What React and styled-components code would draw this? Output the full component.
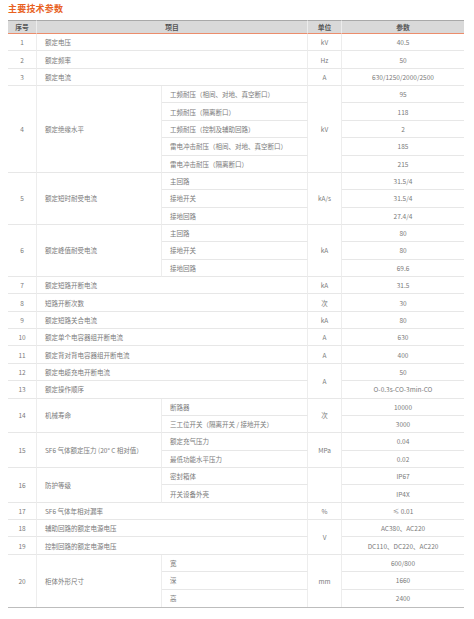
import React from "react";
import styled, { createGlobalStyle } from "styled-components";

const Global = createGlobalStyle`
  html, body { margin: 0; padding: 0; background: #fff; }
  body { font-family: "Noto Sans CJK SC", "Noto Sans", sans-serif; }
`;

const Page = styled.div`
  width: 474px;
  padding: 3px 10px 0 8px;
  box-sizing: border-box;
`;

const Title = styled.h2`
  margin: 0 0 5px 0;
  font-size: 9px;
  line-height: 12px;
  font-weight: 700;
  color: #e8621f;
  letter-spacing: 0.2px;
`;

const Table = styled.div`
  display: grid;
  width: 456px;
  grid-template-columns: 29px 125px 146px 34px 122px;
  grid-template-rows: 14px repeat(33, 17.36px);
  border-bottom: 1px solid #bdbdbd;
`;

const HeadCell = styled.div`
  grid-column: ${(p) => p.$col};
  grid-row: 1;
  background: #d9d9d9;
  border-top: 1.5px solid #a9a9a9;
  border-bottom: 1.5px solid #ec8d6c;
  border-right: ${(p) => (p.$last ? "none" : "1px solid #ececec")};
  display: flex;
  align-items: center;
  justify-content: center;
  font-size: 6.8px;
  font-weight: 700;
  color: #555;
  box-sizing: border-box;
`;

const Cell = styled.div`
  grid-column: ${(p) => p.$col};
  grid-row: ${(p) => p.$row};
  border-bottom: ${(p) => (p.$noBottom ? "none" : "1px solid #e7e7e7")};
  border-right: ${(p) => (p.$last ? "none" : "1px solid #ededed")};
  display: flex;
  align-items: center;
  justify-content: ${(p) => (p.$left ? "flex-start" : "center")};
  padding-left: ${(p) => (p.$left ? "8px" : "0")};
  font-size: 6.5px;
  color: #7a7a7a;
  white-space: nowrap;
  box-sizing: border-box;
`;

const groups = [
  { n: "1", item: "额定电压", unit: "kV", vals: ["40.5"] },
  { n: "2", item: "额定频率", unit: "Hz", vals: ["50"] },
  { n: "3", item: "额定电流", unit: "A", vals: ["630/1250/2000/2500"] },
  {
    n: "4",
    item: "额定绝缘水平",
    unit: "kV",
    subs: [
      "工频耐压（相间、对地、真空断口）",
      "工频耐压（隔离断口）",
      "工频耐压（控制及辅助回路）",
      "雷电冲击耐压（相间、对地、真空断口）",
      "雷电冲击耐压（隔离断口）",
    ],
    vals: ["95", "118", "2", "185", "215"],
  },
  {
    n: "5",
    item: "额定短时耐受电流",
    unit: "kA/s",
    subs: ["主回路", "接地开关", "接地回路"],
    vals: ["31.5/4", "31.5/4", "27.4/4"],
  },
  {
    n: "6",
    item: "额定峰值耐受电流",
    unit: "kA",
    subs: ["主回路", "接地开关", "接地回路"],
    vals: ["80", "80", "69.6"],
  },
  { n: "7", item: "额定短路开断电流", unit: "kA", vals: ["31.5"] },
  { n: "8", item: "短路开断次数", unit: "次", vals: ["30"] },
  { n: "9", item: "额定短路关合电流", unit: "kA", vals: ["80"] },
  { n: "10", item: "额定单个电容器组开断电流", unit: "A", vals: ["630"] },
  { n: "11", item: "额定背对背电容器组开断电流", unit: "A", vals: ["400"] },
  { n: "12", item: "额定电缆充电开断电流", unit: "A", unitSpan: 2, vals: ["50"] },
  { n: "13", item: "额定操作顺序", unit: null, vals: ["O-0.3s-CO-3min-CO"] },
  {
    n: "14",
    item: "机械寿命",
    unit: "次",
    subs: ["断路器", "三工位开关（隔离开关 / 接地开关）"],
    vals: ["10000", "3000"],
  },
  {
    n: "15",
    item: "SF6 气体额定压力 (20° C 相对值）",
    unit: "MPa",
    subs: ["额定充气压力", "最低功能水平压力"],
    vals: ["0.04", "0.02"],
  },
  {
    n: "16",
    item: "防护等级",
    unit: "",
    subs: ["密封箱体", "开关设备外壳"],
    vals: ["IP67", "IP4X"],
  },
  { n: "17", item: "SF6 气体年相对漏率", unit: "%", vals: ["≤ 0.01"] },
  { n: "18", item: "辅助回路的额定电源电压", unit: "V", unitSpan: 2, vals: ["AC380、AC220"] },
  { n: "19", item: "控制回路的额定电源电压", unit: null, vals: ["DC110、DC220、AC220"] },
  {
    n: "20",
    item: "柜体外形尺寸",
    unit: "mm",
    subs: ["宽", "深", "高"],
    vals: ["600/800", "1660", "2400"],
  },
];

function buildCells() {
  const cells = [];
  let row = 2;
  groups.forEach((g, gi) => {
    const span = g.vals.length;
    const rowSpan = `${row} / span ${span}`;
    const isLast = gi === groups.length - 1;
    cells.push(
      <Cell key={`n${gi}`} $col="1" $row={rowSpan} $noBottom={isLast}>
        {g.n}
      </Cell>
    );
    if (g.subs) {
      cells.push(
        <Cell key={`i${gi}`} $col="2" $row={rowSpan} $left $noBottom={isLast}>
          {g.item}
        </Cell>
      );
      g.subs.forEach((s, si) => {
        cells.push(
          <Cell
            key={`s${gi}-${si}`}
            $col="3"
            $row={`${row + si}`}
            $left
            $noBottom={isLast && si === span - 1}
          >
            {s}
          </Cell>
        );
      });
    } else {
      cells.push(
        <Cell key={`i${gi}`} $col="2 / span 2" $row={rowSpan} $left $noBottom={isLast}>
          {g.item}
        </Cell>
      );
    }
    if (g.unit !== null) {
      const us = g.unitSpan || span;
      cells.push(
        <Cell key={`u${gi}`} $col="4" $row={`${row} / span ${us}`} $noBottom={isLast}>
          {g.unit}
        </Cell>
      );
    }
    g.vals.forEach((v, vi) => {
      cells.push(
        <Cell
          key={`v${gi}-${vi}`}
          $col="5"
          $row={`${row + vi}`}
          $last
          $noBottom={isLast && vi === span - 1}
        >
          {v}
        </Cell>
      );
    });
    row += span;
  });
  return cells;
}

export default function App() {
  return (
    <>
      <Global />
      <Page>
        <Title>主要技术参数</Title>
        <Table>
          <HeadCell $col="1">序号</HeadCell>
          <HeadCell $col="2 / span 2">项目</HeadCell>
          <HeadCell $col="4">单位</HeadCell>
          <HeadCell $col="5" $last>
            参数
          </HeadCell>
          {buildCells()}
        </Table>
      </Page>
    </>
  );
}
